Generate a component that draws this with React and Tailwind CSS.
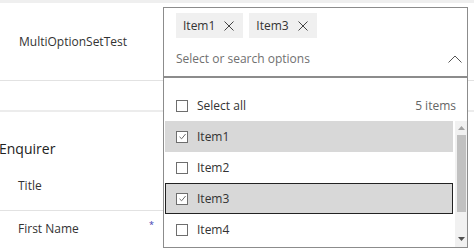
import React from "react";

const font = { fontFamily: '"Segoe UI", "Open Sans", "Noto Sans", sans-serif' };

function Box({ checked }) {
  return (
    <span className="w-[12px] h-[12px] border border-[#6e6e6e] bg-white flex items-center justify-center shrink-0">
      {checked && (
        <svg width="9" height="9" viewBox="0 0 9 9" fill="none">
          <path d="M1.5 4.8 L3.6 6.8 L7.6 2" stroke="#6b6b6b" strokeWidth="1" />
        </svg>
      )}
    </span>
  );
}

function Chip({ label }) {
  return (
    <div className="h-[25px] bg-[#f0f0f0] flex items-center pl-[7px] pr-[9px] gap-[9px] text-[12px] text-[#333]">
      <span>{label}</span>
      <svg width="10" height="10" viewBox="0 0 10 10">
        <path d="M0.5 0.5 L9.5 9.5 M9.5 0.5 L0.5 9.5" stroke="#444" strokeWidth="1" />
      </svg>
    </div>
  );
}

const items = [
  { label: "Item1", checked: true },
  { label: "Item2", checked: false },
  { label: "Item3", checked: true, focus: true },
  { label: "Item4", checked: false },
];

export default function App() {
  return (
    <div className="w-[474px] h-[252px] overflow-hidden bg-white relative text-[#333]" style={font}>
      <div className="h-[3px] bg-[#efefef]" />

      {/* MultiOptionSetTest row */}
      <div className="flex h-[78px] border-b border-[#e2e2e2]">
        <div className="w-[163px] flex items-center pl-[19px] text-[12px]">MultiOptionSetTest</div>
        <div className="flex-1 pt-[4px] pr-[6px] relative">
          <div className="h-[70px] border border-[#8c8c8c] bg-white px-[12px] pt-[5px]">
            <div className="flex gap-[6px]">
              <Chip label="Item1" />
              <Chip label="Item3" />
            </div>
            <div className="flex items-center justify-between h-[32px] mt-[5px] text-[12px] text-[#707070]">
              <span>Select or search options</span>
              <svg width="14" height="8" viewBox="0 0 14 8" fill="none" className="mr-[-7px]">
                <path d="M0.5 7.5 L7 1 L13.5 7.5" stroke="#555" strokeWidth="1" />
              </svg>
            </div>
          </div>

          {/* dropdown list */}
          <div className="absolute left-0 top-[74px] w-[305px] h-[171px] border border-[#8c8c8c] bg-white z-10 flex flex-col">
            <div className="pt-[12px]">
              <div className="h-[31px] flex items-center pl-[12px] pr-[11px] text-[12px]">
                <Box />
                <span className="ml-[9px]">Select all</span>
                <span className="ml-auto text-[#666]">5 items</span>
              </div>
            </div>
            <div className="flex flex-1 pl-[1px]">
              <div className="w-[288px] flex flex-col">
                {items.map((it) => (
                  <div
                    key={it.label}
                    className={
                      "h-[31px] flex items-center text-[12px] " +
                      (it.checked ? "bg-[#d8d8d8] " : "") +
                      (it.focus ? "border border-[#222] pl-[10px]" : "pl-[11px]")
                    }
                  >
                    <Box checked={it.checked} />
                    <span className="ml-[9px]">{it.label}</span>
                  </div>
                ))}
              </div>
              <div className="w-[12px] ml-[2px] bg-[#f1f1f1] flex flex-col items-center">
                <div className="h-[14px] flex items-center justify-center">
                  <svg width="7" height="4" viewBox="0 0 7 4"><path d="M0 4 L3.5 0 L7 4 Z" fill="#a3a3a3" /></svg>
                </div>
                <div className="w-[9px] h-[77px] bg-[#c1c1c1]" />
                <div className="flex-1 flex items-end justify-center pb-[6px]">
                  <svg width="7" height="4" viewBox="0 0 7 4"><path d="M0 0 L7 0 L3.5 4 Z" fill="#505050" /></svg>
                </div>
              </div>
            </div>
          </div>
        </div>
      </div>

      <div className="h-[31px] border-b-2 border-[#ececec]" />

      {/* Enquirer section */}
      <div className="h-[54px] flex items-end pb-[7px] text-[14px] text-[#222] ml-[-1px]">Enquirer</div>
      <div className="w-[163px] h-[45px] border-b border-[#e2e2e2] flex items-center pl-[18px] pb-[4px] text-[12px]">Title</div>
      <div className="w-[163px] h-[36px] flex items-center pl-[18px] text-[12px] relative">
        First Name
        <span className="absolute left-[149px] top-[7px] text-[9px] text-[#3b3bb0]">*</span>
      </div>
    </div>
  );
}
